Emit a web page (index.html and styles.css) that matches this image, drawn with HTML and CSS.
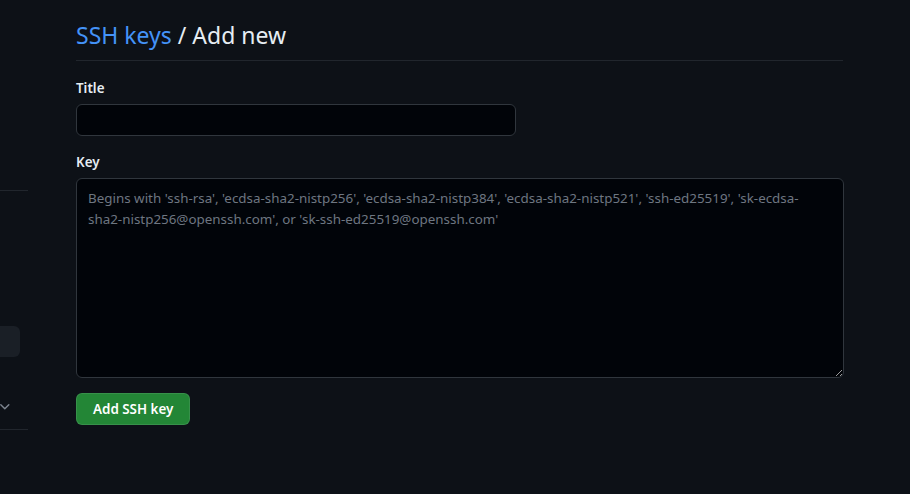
FILE: index.html
```html
<!DOCTYPE html>
<html lang="en">
<head>
<meta charset="utf-8">
<title>Add new SSH key</title>
<link rel="stylesheet" href="styles.css">
</head>
<body>
<div class="layout">
  <aside class="sidebar">
    <div class="side-rule side-rule-top"></div>
    <div class="side-item"></div>
    <div class="side-toggle">
      <svg width="10" height="6" viewBox="0 0 10 6" aria-hidden="true"><polyline points="0.8,0.8 4.8,4.8 8.8,0.8" fill="none" stroke="#7d8590" stroke-width="1.4" stroke-linecap="round" stroke-linejoin="round"/></svg>
    </div>
    <div class="side-rule"></div>
  </aside>
  <main class="main">
    <h1 class="heading"><a class="crumb" href="#">SSH keys</a> / Add new</h1>
    <form class="form">
      <label class="label" for="title">Title</label>
      <input class="input" id="title" type="text">
      <label class="label label-key" for="key">Key</label>
      <textarea class="textarea" id="key" placeholder="Begins with 'ssh-rsa', 'ecdsa-sha2-nistp256', 'ecdsa-sha2-nistp384', 'ecdsa-sha2-nistp521', 'ssh-ed25519', 'sk-ecdsa-sha2-nistp256@openssh.com', or 'sk-ssh-ed25519@openssh.com'"></textarea>
      <div class="actions"><button class="btn" type="button">Add SSH key</button></div>
    </form>
  </main>
</div>
</body>
</html>
```
FILE: styles.css
```css
* { box-sizing: border-box; }
html, body { margin: 0; height: 100%; }
body {
  background: #0d1117;
  color: #e6edf3;
  font-family: "Noto Sans", "Open Sans", "Liberation Sans", sans-serif;
  font-size: 13.4px;
  overflow: hidden;
}
.layout {
  display: flex;
  gap: 48px;
  height: 100%;
}
.sidebar {
  width: 28px;
  flex: none;
  display: flex;
  flex-direction: column;
  padding-top: 190px;
}
.side-rule {
  height: 1px;
  background: #21262d;
}
.side-item {
  margin-top: 135px;
  width: 20px;
  height: 31px;
  background: #1a1f26;
  border-radius: 0 6px 6px 0;
}
.side-toggle {
  height: 72px;
  display: flex;
  align-items: flex-start;
  padding-top: 47px;
}
.main {
  width: 767px;
  flex: none;
}
.heading {
  margin: 0;
  padding: 19px 0 9px;
  font-size: 23px;
  font-weight: 400;
  line-height: 32px;
  color: #e6edf3;
  border-bottom: 1px solid #21262d;
}
.crumb {
  color: #4493f8;
  text-decoration: none;
}
.form {
  display: flex;
  flex-direction: column;
  align-items: flex-start;
  padding-top: 17px;
}
.label {
  font-weight: 600;
  font-size: 13.4px;
  line-height: 20px;
  color: #e6edf3;
  margin-bottom: 6px;
}
.label-key { margin-top: 16px; }
.input {
  width: 440px;
  height: 32px;
  background: #010409;
  border: 1px solid #30363d;
  border-radius: 6px;
  color: #e6edf3;
  font: inherit;
  padding: 5px 12px;
}
.textarea {
  width: 768px;
  height: 200px;
  background: #010409;
  border: 1px solid #30363d;
  border-radius: 6px;
  color: #e6edf3;
  font: inherit;
  font-size: 13.4px;
  line-height: 21px;
  padding: 9px 11px;
  resize: vertical;
}
.textarea::placeholder { color: #6e7681; }
.actions { margin-top: 15px; }
.btn {
  height: 32px;
  padding: 0 16px;
  background: #238636;
  border: 1px solid rgba(240,246,252,0.1);
  border-radius: 6px;
  color: #ffffff;
  font: inherit;
  font-weight: 600;
  font-size: 13.4px;
}
```
